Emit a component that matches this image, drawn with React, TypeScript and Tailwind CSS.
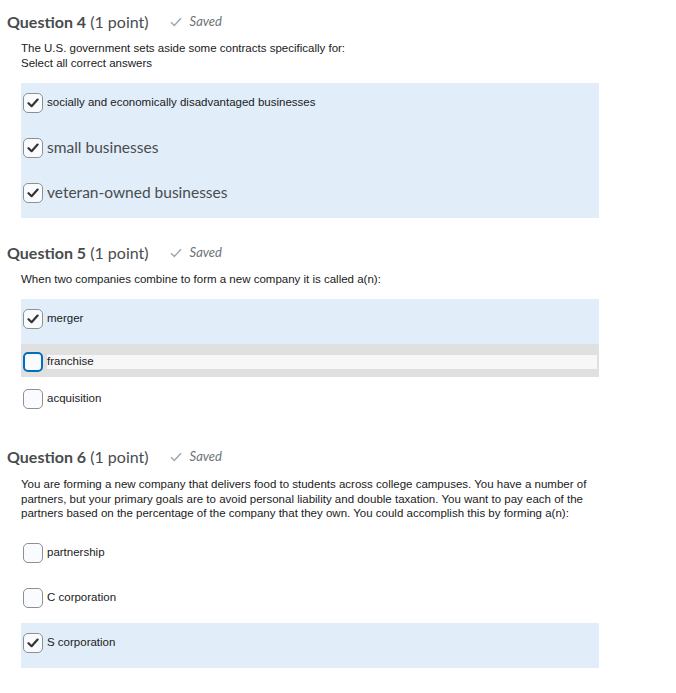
import React from 'react'

type Option = { label: string; checked?: boolean; big?: boolean; focus?: boolean; low?: boolean }

const Box = ({ checked, focus }: { checked?: boolean; focus?: boolean }) => (
    <span
        className={`flex h-[20px] w-[20px] shrink-0 items-center justify-center rounded-[5px] bg-[#f9fbff] ${
            focus ? 'border-2 border-[#006fbf]' : 'border border-[#8d9093]'
        }`}
    >
        {checked && (
            <svg width="12" height="10" viewBox="0 0 12 10">
                <path d="M1.5 5.2 L4.6 8.2 L10.6 1.6" fill="none" stroke="#333" strokeWidth="2.2" strokeLinecap="round" strokeLinejoin="round" />
            </svg>
        )}
    </span>
)

const Row = ({ opt }: { opt: Option }) => {
    const text = opt.big
        ? "text-[15.5px] text-[#494c4e] font-['Lato',sans-serif]"
        : "text-[11.5px] text-[#202122] font-['Liberation_Sans',Arial,sans-serif]"

    if (opt.focus) {
        return (
            <div className="flex h-[33px] items-center bg-[#e0e0e0] pl-[2px] pr-[2px] pt-[2px]">
                <Box focus />
                <span className={`ml-[4px] flex h-[14px] flex-1 items-center bg-[#f7f7f7] ${text}`}>{opt.label}</span>
            </div>
        )
    }

    return (
        <div className={`flex h-[45px] items-start pl-[2px] ${opt.low ? 'pt-[12px]' : 'pt-[10px]'} ${opt.checked ? 'bg-[#e1edf9]' : ''}`}>
            <Box checked={opt.checked} />
            <span className={`ml-[4px] flex h-[20px] items-center ${text}`}>{opt.label}</span>
        </div>
    )
}

const Question = ({
    num,
    prompt,
    options,
    leading = 'leading-[15px]',
    top = 'mt-[8px]',
}: {
    num: number
    prompt: string[]
    options: Option[]
    leading?: string
    top?: string
}) => (
    <section className="mt-[24px] first:mt-[11px]">
        <div className="flex h-[22px] items-center pl-[7px] text-[#494c4e] font-['Lato',sans-serif]">
            <h2 className="text-[16px]">
                <span className="font-bold">Question {num}</span> (1 point)
            </h2>
            <svg className="ml-[21px]" width="12" height="10" viewBox="0 0 12 10">
                <path d="M1 5.2 L4.3 8.4 L11 1.2" fill="none" stroke="#a0a4a7" strokeWidth="1.4" />
            </svg>
            <span className="ml-[8px] text-[13px] italic text-[#6e7376]">Saved</span>
        </div>
        <div className={`${top} pl-[21px] pr-[80px] text-[11.5px] ${leading} text-[#202122] font-['Liberation_Sans',Arial,sans-serif]`}>
            {prompt.map((p) => (
                <p key={p}>{p}</p>
            ))}
        </div>
        <div className="mt-[12px] ml-[21px] w-[578px]">
            {options.map((o) => (
                <Row key={o.label} opt={o} />
            ))}
        </div>
    </section>
)

export default function App() {
    return (
        <div className="min-h-[693px] w-[676px] bg-white pb-[20px]">
            <Question
                num={4}
                prompt={['The U.S. government sets aside some contracts specifically for:', 'Select all correct answers']}
                options={[
                    { label: 'socially and economically disadvantaged businesses', checked: true },
                    { label: 'small businesses', checked: true, big: true },
                    { label: 'veteran-owned businesses', checked: true, big: true },
                ]}
            />
            <Question
                num={5}
                prompt={['When two companies combine to form a new company it is called a(n):']}
                options={[
                    { label: 'merger', checked: true },
                    { label: 'franchise', focus: true },
                    { label: 'acquisition', low: true },
                ]}
            />
            <Question
                num={6}
                top="mt-[9px]"
                leading="leading-[14.5px]"
                prompt={[
                    'You are forming a new company that delivers food to students across college campuses. You have a number of partners, but your primary goals are to avoid personal liability and double taxation. You want to pay each of the partners based on the percentage of the company that they own. You could accomplish this by forming a(n):',
                ]}
                options={[{ label: 'partnership' }, { label: 'C corporation' }, { label: 'S corporation', checked: true }]}
            />
        </div>
    )
}
